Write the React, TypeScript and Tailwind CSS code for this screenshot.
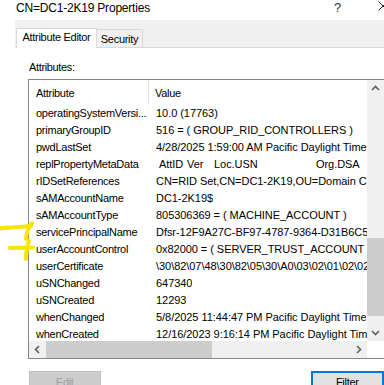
import React from "react";

const rows: [string, React.ReactNode][] = [
  ["operatingSystemVersi...", "10.0 (17763)"],
  ["primaryGroupID", "516 = ( GROUP_RID_CONTROLLERS )"],
  ["pwdLastSet", "4/28/2025 1:59:00 AM Pacific Daylight Time"],
  [
    "replPropertyMetaData",
    <span className="whitespace-pre">
      <span className="inline-block w-[31px] pl-[3px]">AttID</span>
      <span className="inline-block w-[27px]">Ver</span>
      <span className="inline-block w-[102px]">Loc.USN</span>
      <span>Org.DSA</span>
    </span>,
  ],
  ["rIDSetReferences", "CN=RID Set,CN=DC1-2K19,OU=Domain Controllers,DC=corp"],
  ["sAMAccountName", "DC1-2K19$"],
  ["sAMAccountType", "805306369 = ( MACHINE_ACCOUNT )"],
  ["servicePrincipalName", "Dfsr-12F9A27C-BF97-4787-9364-D31B6C55A7B1"],
  ["userAccountControl", "0x82000 = ( SERVER_TRUST_ACCOUNT | TRUSTED_FOR_DELEGATION )"],
  ["userCertificate", "\\30\\82\\07\\48\\30\\82\\05\\30\\A0\\03\\02\\01\\02\\02"],
  ["uSNChanged", "647340"],
  ["uSNCreated", "12293"],
  ["whenChanged", "5/8/2025 11:44:47 PM Pacific Daylight Time"],
  ["whenCreated", "12/16/2023 9:16:14 PM Pacific Daylight Time"],
];

function Chevron({ dir }: { dir: "up" | "down" | "left" | "right" }) {
  const d =
    dir === "up"
      ? "M1 6 L4.5 2.5 L8 6"
      : dir === "down"
      ? "M1 3 L4.5 6.5 L8 3"
      : dir === "left"
      ? "M6 1 L2.5 4.5 L6 8"
      : "M3 1 L6.5 4.5 L3 8";
  return (
    <svg width="9" height="9" viewBox="0 0 9 9">
      <path d={d} fill="none" stroke="#606060" strokeWidth="1.6" />
    </svg>
  );
}

export default function App() {
  return (
    <div className="relative w-[384px] h-[385px] overflow-hidden bg-white text-black font-['Liberation_Sans',Arial,sans-serif]">
      {/* title bar */}
      <div className="h-[20px] flex items-center pl-[16px] text-[12px] tracking-[-0.2px] relative">
        <span className="-mt-[5px]">CN=DC1-2K19 Properties</span>
        <span className="absolute left-[334px] top-[-2px] text-[13px] text-[#333]">?</span>
        <svg className="absolute left-[378px] top-[1px]" width="10" height="10" viewBox="0 0 10 10">
          <path d="M0.5 0.5 L9.5 9.5 M9.5 0.5 L0.5 9.5" stroke="#222" strokeWidth="1" />
        </svg>
      </div>

      {/* tab strip */}
      <div className="ml-[15px] h-[28px] bg-[#f0f0f0] border-b border-[#d9d9d9] flex items-end pl-[1px] text-[11px] tracking-[-0.3px]">
        <div className="h-[20px] w-[81px] -mb-px bg-white border border-b-0 border-[#d9d9d9] flex items-center justify-center pb-[2px]">
          Attribute Editor
        </div>
        <div className="h-[18px] w-[46px] border border-l-0 border-b-0 border-[#d9d9d9] flex items-center justify-center pt-[1px]">
          Security
        </div>
      </div>

      {/* tab page */}
      <div className="pl-[29px] pt-[13px] text-[11px] tracking-[-0.35px] h-[31px] leading-[13px]">
        Attributes:
      </div>

      <div className="ml-[28px] w-[357px] h-[280px] border border-[#828790] flex text-[11px] leading-[17px]">
        <div className="flex-1 flex flex-col min-w-0">
          <div className="h-[25px] flex shrink-0 tracking-[-0.3px]">
            <div className="w-[120px] pl-[7px] flex items-center border-r border-[#e5e5e5] pt-[1px]">Attribute</div>
            <div className="pl-[6px] flex items-center pt-[1px]">Value</div>
          </div>
          <div className="h-[236px] overflow-hidden">
            {rows.map(([a, v], i) => (
              <div key={i} className="h-[17px] flex whitespace-nowrap">
                <div className="w-[121px] shrink-0 pl-[7px] tracking-[-0.25px]">{a}</div>
                <div className="pl-[6px] overflow-hidden tracking-[-0.05px]">{v}</div>
              </div>
            ))}
          </div>
          <div className="h-[17px] bg-[#f0f0f0] flex items-center shrink-0">
            <div className="w-[17px] flex items-center justify-center">
              <Chevron dir="left" />
            </div>
            <div className="w-[166px] h-[17px] bg-[#cdcdcd]" />
            <div className="flex-1" />
            <div className="w-[17px] flex items-center justify-center">
              <Chevron dir="right" />
            </div>
          </div>
        </div>
        <div className="w-[17px] flex flex-col shrink-0">
          <div className="h-[261px] bg-[#f0f0f0] flex flex-col">
            <div className="h-[17px] flex items-center justify-center">
              <Chevron dir="up" />
            </div>
            <div className="h-[141px]" />
            <div className="h-[78px] bg-[#cdcdcd]" />
            <div className="flex-1" />
            <div className="h-[17px] flex items-center justify-center">
              <Chevron dir="down" />
            </div>
          </div>
          <div className="flex-1 bg-white" />
        </div>
      </div>

      {/* buttons */}
      <div className="mt-[12px] flex pl-[29px] text-[11px] tracking-[-0.3px]">
        <div className="w-[73px] h-[23px] bg-[#cccccc] border border-[#bfbfbf] text-[#a0a0a0] flex items-center justify-center">
          Edit
        </div>
        <div className="ml-[210px] w-[75px] h-[23px] bg-[#e1e1e1] border-2 border-[#0078d7] flex items-center justify-center">
          Filter
        </div>
      </div>

      {/* yellow annotation arrows */}
      <svg className="absolute left-0 top-[215px] pointer-events-none" width="45" height="50" viewBox="0 0 45 50">
        <g fill="none" stroke="#f7e600" strokeWidth="4" strokeLinecap="round" strokeLinejoin="round">
          <path d="M-2 13.5 Q14 12.5 31 11" />
          <path d="M32 8 Q27 14 26 24" />
          <path d="M10 33 Q22 32.5 33 32.5" />
          <path d="M29 26 Q26 34 26 44" />
        </g>
      </svg>
    </div>
  );
}
